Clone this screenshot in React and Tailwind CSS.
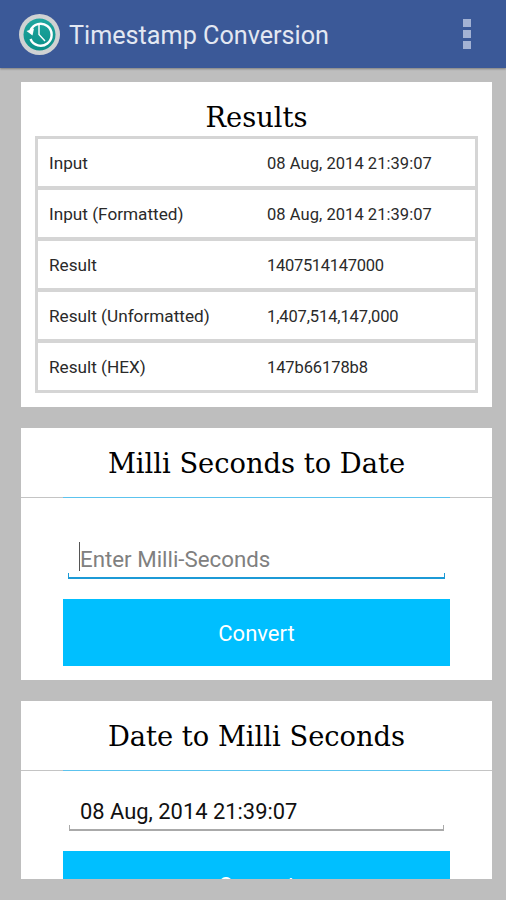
const rows = [
  ['Input', '08 Aug, 2014 21:39:07', 'tracking-[0.05px]'],
  ['Input (Formatted)', '08 Aug, 2014 21:39:07', 'tracking-[0.05px]'],
  ['Result', '1407514147000', 'tracking-[-0.3px]'],
  ['Result (Unformatted)', '1,407,514,147,000', 'tracking-[-0.12px]'],
  ['Result (HEX)', '147b66178b8', 'tracking-[-0.1px]'],
]

const serif = "font-['DejaVu_Serif',serif]"

function AppIcon() {
  return (
    <svg width="41" height="41" viewBox="0 0 41 41" className="shrink-0">
      <defs>
        <linearGradient id="teal" x1="0" y1="0" x2="0" y2="1">
          <stop offset="0" stopColor="#1fa7a0" />
          <stop offset="1" stopColor="#0c8f88" />
        </linearGradient>
      </defs>
      <circle cx="20.5" cy="20.5" r="20.5" fill="#cfd2d3" />
      <circle cx="20.5" cy="20.5" r="16" fill="url(#teal)" />
      <path d="M11.5 16.5 A11 11 0 1 1 11.5 25" fill="none" stroke="#fff" strokeWidth="2.4" />
      <path d="M7.5 17 L15 14.5 L13.5 21.5 Z" fill="#fff" />
      <path d="M20 11 V20.5 L26 27" fill="none" stroke="#fff" strokeWidth="1.4" />
    </svg>
  )
}

function SectionTitle({ children }) {
  return (
    <div className="relative h-[70px] border-b border-[#c4c4c4] pt-4 text-center">
      <h2 className={`${serif} text-[27.3px] leading-[40px] font-normal text-black`}>{children}</h2>
      {/* blue highlight sitting on the divider */}
      <div className="absolute -bottom-px left-[42px] right-[42px] h-px bg-[#5cc3ee]" />
    </div>
  )
}

// holo style underline with small ticks at both ends
function Underline({ className }) {
  return <span className={`absolute inset-x-0 bottom-0 h-[6px] border-x border-b-2 ${className}`} />
}

function ConvertButton() {
  return <button className="mt-5 block h-[67px] w-full bg-[#00bfff] pt-0.5 text-[22px] text-white">Convert</button>
}

export default function App() {
  return (
    <div className="h-[900px] overflow-hidden bg-[#bebebe] font-['Roboto',sans-serif]">
      <header className="flex h-[68px] items-center bg-[#3b5998] pl-[19px] pr-[35px] shadow-[0_1px_2px_rgba(0,0,0,0.35)]">
        <AppIcon />
        <h1 className="ml-[9px] flex-1 pt-1 text-[25.2px] leading-none text-[#e3e8f2]">Timestamp Conversion</h1>
        <div className="flex flex-col gap-[3px]">
          <span className="size-2 bg-[#a3b2d4]" />
          <span className="size-2 bg-[#a3b2d4]" />
          <span className="size-2 bg-[#a3b2d4]" />
        </div>
      </header>

      <main className="ml-[21px] mr-[14px] mt-[14px] flex h-[797px] flex-col gap-[21px] overflow-hidden">
        <section className="shrink-0 bg-white px-[14px] pb-[14px]">
          <h2 className={`${serif} pt-[18px] text-center text-[27.3px] leading-[36px] font-normal text-black`}>Results</h2>
          <div className="flex flex-col gap-1 border-[3px] border-[#d5d5d5] bg-[#d5d5d5]">
            {rows.map(([label, value, spacing]) => (
              <div key={label} className="flex h-[47px] items-center bg-white pl-[11px] pt-1 text-[#2a2a2a]">
                <span className="w-[218px] pb-0.5 text-[17.2px]">{label}</span>
                <span className={`text-[16.5px] ${spacing}`}>{value}</span>
              </div>
            ))}
          </div>
        </section>

        <section className="shrink-0 bg-white">
          <SectionTitle>Milli Seconds to Date</SectionTitle>
          <div className="px-[42px] pb-[14px]">
            <div className="relative mx-[5px] mt-[42px] h-[39px] pl-3 text-[22.3px] leading-[38px] text-[#808080]">
              <Underline className="border-[#1c9ad6]" />
              <span className="absolute left-[11px] top-0.5 h-[29px] w-px bg-[#555]" />
              Enter Milli-Seconds
            </div>
            <ConvertButton />
          </div>
        </section>

        <section className="shrink-0 bg-white">
          <SectionTitle>Date to Milli Seconds</SectionTitle>
          <div className="px-[42px] pb-[14px]">
            <div className="relative mx-[6px] mt-[22px] h-[38px] pl-[11px] text-[21.9px] leading-[37px] text-[#111]">
              <Underline className="border-[#aaa]" />
              08 Aug, 2014 21:39:07
            </div>
            <ConvertButton />
          </div>
        </section>
      </main>
    </div>
  )
}
